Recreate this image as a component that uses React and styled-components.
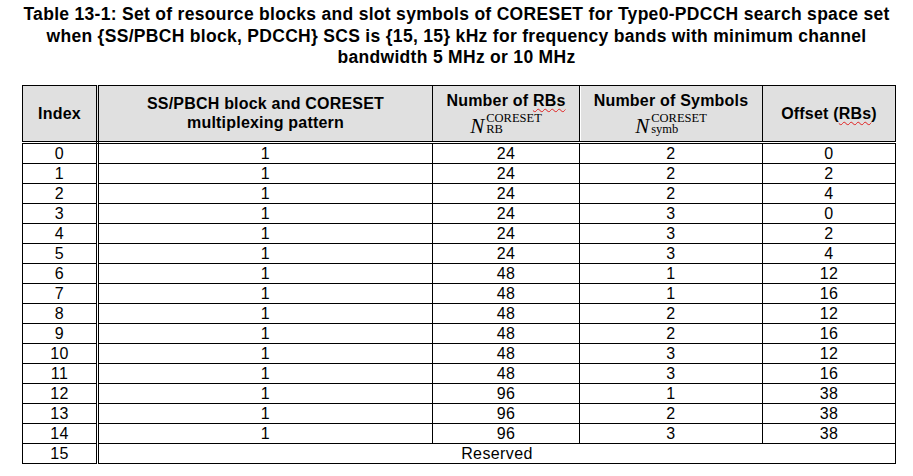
import React from 'react';
import styled, { createGlobalStyle } from 'styled-components';

const GlobalStyle = createGlobalStyle`
    html, body {
        margin: 0;
        padding: 0;
        background: #ffffff;
    }
    body {
        font-family: "Liberation Sans", Arial, sans-serif;
        color: #000000;
    }
`;

const Page = styled.div`
    width: 913px;
    height: 476px;
    overflow: hidden;
    display: flex;
    flex-direction: column;
    align-items: flex-start;
`;

const Caption = styled.h1`
    margin: 4px 0 0;
    width: 913px;
    text-align: center;
    font-size: 17.5px;
    letter-spacing: 0.3px;
    line-height: 21.5px;
    font-weight: 700;
`;

const Table = styled.table`
    margin: 16px 0 0 22px;
    width: 873px;
    border-collapse: collapse;
    table-layout: fixed;
    font-size: 16px;
`;

const HeadCell = styled.th`
    height: 55px;
    padding: 0 4px;
    background: #e0e0e0;
    border: 1px solid #000;
    border-bottom: 3px double #000;
    border-right: ${(p) => (p.$double ? '3px double #000' : '1px solid #000')};
    box-shadow: ${(p) => (p.$gap ? 'inset 1px 0 0 #ffffff' : 'none')};
    font-weight: 700;
    letter-spacing: 0.2px;
    line-height: 19px;
    text-align: center;
    vertical-align: middle;
`;

const Cell = styled.td`
    height: 19px;
    padding: 0;
    border: 1px solid #000;
    border-right: ${(p) => (p.$double ? '3px double #000' : '1px solid #000')};
    letter-spacing: 0.4px;
    line-height: 19px;
    text-align: center;
    vertical-align: middle;
`;

const Squiggle = styled.span`
    text-decoration: underline wavy #e02020;
    text-decoration-thickness: 1px;
    text-underline-offset: 2px;
    text-decoration-skip-ink: none;
`;

const Math = styled.span`
    display: flex;
    justify-content: center;
    align-items: flex-start;
    padding-top: 3px;
    font-family: "Liberation Serif", "Times New Roman", serif;
    font-weight: 400;
    letter-spacing: 0;
`;

const Var = styled.span`
    font-style: italic;
    font-size: 21px;
    line-height: 20px;
    margin-right: 2px;
    margin-top: 3px;
`;

const Scripts = styled.span`
    display: flex;
    flex-direction: column;
    align-items: flex-start;
    font-size: 12.5px;
    line-height: 11px;
`;

const rows = [
    [0, 1, 24, 2, 0],
    [1, 1, 24, 2, 2],
    [2, 1, 24, 2, 4],
    [3, 1, 24, 3, 0],
    [4, 1, 24, 3, 2],
    [5, 1, 24, 3, 4],
    [6, 1, 48, 1, 12],
    [7, 1, 48, 1, 16],
    [8, 1, 48, 2, 12],
    [9, 1, 48, 2, 16],
    [10, 1, 48, 3, 12],
    [11, 1, 48, 3, 16],
    [12, 1, 96, 1, 38],
    [13, 1, 96, 2, 38],
    [14, 1, 96, 3, 38],
];

const Coreset = ({ sub }) => (
    <Math>
        <Var>N</Var>
        <Scripts>
            <span>CORESET</span>
            <span>{sub}</span>
        </Scripts>
    </Math>
);

export default function App() {
    return (
        <Page>
            <GlobalStyle />
            <Caption>
                Table 13-1: Set of resource blocks and slot symbols of CORESET for Type0-PDCCH search space set
                <br />
                when {'{'}SS/PBCH block, PDCCH{'}'} SCS is {'{'}15, 15{'}'} kHz for frequency bands with minimum channel
                <br />
                bandwidth 5 MHz or 10 MHz
            </Caption>
            <Table>
                <colgroup>
                    <col style={{ width: 75 }} />
                    <col style={{ width: 335 }} />
                    <col style={{ width: 147 }} />
                    <col style={{ width: 183 }} />
                    <col style={{ width: 133 }} />
                </colgroup>
                <thead>
                    <tr>
                        <HeadCell $double>Index</HeadCell>
                        <HeadCell>
                            SS/PBCH block and CORESET
                            <br />
                            multiplexing pattern
                        </HeadCell>
                        <HeadCell>
                            Number of <Squiggle>RBs</Squiggle>
                            <Coreset sub="RB" />
                        </HeadCell>
                        <HeadCell $gap>
                            Number of Symbols
                            <Coreset sub="symb" />
                        </HeadCell>
                        <HeadCell>
                            Offset (<Squiggle>RBs</Squiggle>)
                        </HeadCell>
                    </tr>
                </thead>
                <tbody>
                    {rows.map((r) => (
                        <tr key={r[0]}>
                            <Cell $double>{r[0]}</Cell>
                            <Cell>{r[1]}</Cell>
                            <Cell>{r[2]}</Cell>
                            <Cell>{r[3]}</Cell>
                            <Cell>{r[4]}</Cell>
                        </tr>
                    ))}
                    <tr>
                        <Cell $double>15</Cell>
                        <Cell colSpan={4}>Reserved</Cell>
                    </tr>
                </tbody>
            </Table>
        </Page>
    );
}
